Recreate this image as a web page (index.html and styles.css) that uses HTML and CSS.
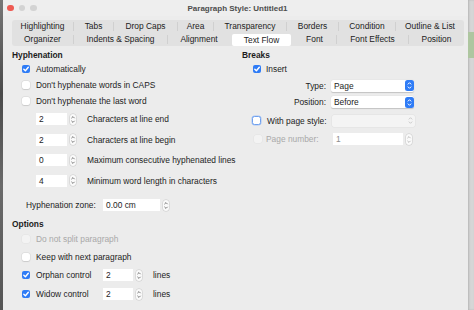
FILE: index.html
```html
<!DOCTYPE html>
<html lang="en">
<head>
    <meta charset="UTF-8">
    <meta name="viewport" content="width=device-width, initial-scale=1.0">
    <title>Paragraph Style: Untitled1</title>
    <link rel="stylesheet" href="styles.css">
</head>
<body>
    <div class="screen">
        <div class="edge-left"></div>

        <div class="window">
            <div class="titlebar">
                <div class="lights">
                    <span class="light red"></span>
                    <span class="light"></span>
                    <span class="light"></span>
                </div>
                <div class="title">Paragraph Style: Untitled1</div>
                <div></div>
            </div>

            <div class="tabs">
                <div class="tab-row row-1">
                    <span class="tab">Highlighting</span>
                    <span class="tab">Tabs</span>
                    <span class="tab">Drop Caps</span>
                    <span class="tab">Area</span>
                    <span class="tab">Transparency</span>
                    <span class="tab">Borders</span>
                    <span class="tab">Condition</span>
                    <span class="tab">Outline &amp; List</span>
                </div>
                <div class="tab-row row-2">
                    <span class="tab">Organizer</span>
                    <span class="tab">Indents &amp; Spacing</span>
                    <span class="tab">Alignment</span>
                    <span class="tab active">Text Flow</span>
                    <span class="tab no-sep">Font</span>
                    <span class="tab">Font Effects</span>
                    <span class="tab">Position</span>
                </div>
            </div>

            <div class="content">
                <div class="columns">
                    <!-- Hyphenation -->
                    <section class="col">
                        <div class="head">Hyphenation</div>

                        <div class="check-row">
                            <span class="box checked"><svg viewBox="0 0 8 8"><path d="M1.8 4.2 L3.4 5.8 L6.3 2.2"/></svg></span>
                            <span>Automatically</span>
                        </div>
                        <div class="check-row">
                            <span class="box"></span>
                            <span>Don't hyphenate words in CAPS</span>
                        </div>
                        <div class="check-row">
                            <span class="box"></span>
                            <span>Don't hyphenate the last word</span>
                        </div>

                        <div class="spin-row">
                            <span class="field">2</span>
                            <span class="stepper"><svg viewBox="0 0 6 11"><path d="M1.4 4.2 L3 2.6 L4.6 4.2 M1.4 6.8 L3 8.4 L4.6 6.8"/></svg></span>
                            <span class="spin-label">Characters at line end</span>
                        </div>
                        <div class="spin-row">
                            <span class="field">2</span>
                            <span class="stepper"><svg viewBox="0 0 6 11"><path d="M1.4 4.2 L3 2.6 L4.6 4.2 M1.4 6.8 L3 8.4 L4.6 6.8"/></svg></span>
                            <span class="spin-label">Characters at line begin</span>
                        </div>
                        <div class="spin-row">
                            <span class="field">0</span>
                            <span class="stepper"><svg viewBox="0 0 6 11"><path d="M1.4 4.2 L3 2.6 L4.6 4.2 M1.4 6.8 L3 8.4 L4.6 6.8"/></svg></span>
                            <span class="spin-label">Maximum consecutive hyphenated lines</span>
                        </div>
                        <div class="spin-row">
                            <span class="field">4</span>
                            <span class="stepper"><svg viewBox="0 0 6 11"><path d="M1.4 4.2 L3 2.6 L4.6 4.2 M1.4 6.8 L3 8.4 L4.6 6.8"/></svg></span>
                            <span class="spin-label">Minimum word length in characters</span>
                        </div>

                        <div class="zone-row">
                            <span class="zone-label">Hyphenation zone:</span>
                            <span class="field wide">0.00 cm</span>
                            <span class="stepper"><svg viewBox="0 0 6 11"><path d="M1.4 4.2 L3 2.6 L4.6 4.2 M1.4 6.8 L3 8.4 L4.6 6.8"/></svg></span>
                        </div>
                    </section>

                    <!-- Breaks -->
                    <section class="col">
                        <div class="head">Breaks</div>

                        <div class="check-row insert">
                            <span class="box checked"><svg viewBox="0 0 8 8"><path d="M1.8 4.2 L3.4 5.8 L6.3 2.2"/></svg></span>
                            <span>Insert</span>
                        </div>

                        <div class="select-row">
                            <span class="select-label">Type:</span>
                            <span class="select">Page<span class="select-btn"><svg viewBox="0 0 9 11"><path d="M2.8 4.4 L4.5 2.7 L6.2 4.4 M2.8 6.6 L4.5 8.3 L6.2 6.6"/></svg></span></span>
                        </div>
                        <div class="select-row position">
                            <span class="select-label">Position:</span>
                            <span class="select">Before<span class="select-btn"><svg viewBox="0 0 9 11"><path d="M2.8 4.4 L4.5 2.7 L6.2 4.4 M2.8 6.6 L4.5 8.3 L6.2 6.6"/></svg></span></span>
                        </div>

                        <div class="page-row style-row">
                            <span class="box focus"></span>
                            <span class="page-label">With page style:</span>
                            <span class="select disabled"><span class="select-btn off"><svg viewBox="0 0 9 11"><path d="M2.8 4.4 L4.5 2.7 L6.2 4.4 M2.8 6.6 L4.5 8.3 L6.2 6.6"/></svg></span></span>
                        </div>
                        <div class="page-row number-row">
                            <span class="box disabled"></span>
                            <span class="page-label grey">Page number:</span>
                            <span class="field number">1</span>
                            <span class="stepper faint"><svg viewBox="0 0 6 11"><path d="M1.4 4.2 L3 2.6 L4.6 4.2 M1.4 6.8 L3 8.4 L4.6 6.8"/></svg></span>
                        </div>
                    </section>
                </div>

                <!-- Options -->
                <section class="options">
                    <div class="head">Options</div>

                    <div class="opt-row">
                        <span class="box disabled"></span>
                        <span class="grey">Do not split paragraph</span>
                    </div>
                    <div class="opt-row">
                        <span class="box"></span>
                        <span>Keep with next paragraph</span>
                    </div>
                    <div class="opt-row">
                        <span class="box checked"><svg viewBox="0 0 8 8"><path d="M1.8 4.2 L3.4 5.8 L6.3 2.2"/></svg></span>
                        <span class="opt-label">Orphan control</span>
                        <span class="field">2</span>
                        <span class="stepper"><svg viewBox="0 0 6 11"><path d="M1.4 4.2 L3 2.6 L4.6 4.2 M1.4 6.8 L3 8.4 L4.6 6.8"/></svg></span>
                        <span class="lines">lines</span>
                    </div>
                    <div class="opt-row last">
                        <span class="box checked"><svg viewBox="0 0 8 8"><path d="M1.8 4.2 L3.4 5.8 L6.3 2.2"/></svg></span>
                        <span class="opt-label">Widow control</span>
                        <span class="field">2</span>
                        <span class="stepper"><svg viewBox="0 0 6 11"><path d="M1.4 4.2 L3 2.6 L4.6 4.2 M1.4 6.8 L3 8.4 L4.6 6.8"/></svg></span>
                        <span class="lines">lines</span>
                    </div>
                </section>
            </div>
        </div>

        <div class="edge-right">
            <div class="green"></div>
        </div>
    </div>
</body>
</html>
```

FILE: styles.css
```css
body {
    margin: 0;
    padding: 0;
    font-family: "Liberation Sans", Arial, sans-serif;
    font-size: 8.4px;
    color: #1c1c1c;
    background-color: #d4d4d4;
}

.screen {
    display: flex;
    width: 474px;
    height: 310px;
    overflow: hidden;
}

.edge-left {
    width: 3px;
    background: linear-gradient(#777 0, #4a4a4a 30%, #6a6a6a 60%, #555 100%);
}

.edge-right {
    flex: 1;
    background-color: #d6d6d6;
    box-shadow: inset 1px 0 2px rgba(0, 0, 0, 0.15);
    padding-top: 32px;
}

.edge-right .green {
    height: 26px;
    background-color: #aec6a0;
}

.window {
    width: 465px;
    display: flex;
    flex-direction: column;
    background-color: #ececec;
}

/* title bar */
.titlebar {
    height: 16px;
    display: grid;
    grid-template-columns: 1fr auto 1fr;
    align-items: center;
    background-color: #eeeeee;
}

.lights {
    display: flex;
    gap: 5px;
    padding-left: 4px;
}

.light {
    width: 6.5px;
    height: 6.5px;
    border-radius: 50%;
    background-color: #d3d3d3;
}

.light.red {
    background-color: #ee5a52;
}

.title {
    font-size: 8px;
    font-weight: bold;
    color: #4d4d4d;
    padding-left: 4px;
}

/* tabs */
.tabs {
    margin: 4px 4px 0 9px;
    background-color: #e1e1e1;
    border-radius: 3px;
}

.tab-row {
    display: grid;
    height: 13px;
    align-items: center;
}

.row-1 {
    grid-template-columns: 61px 40px 64px 36px 73px 52px 57px 1fr;
}

.row-2 {
    grid-template-columns: 61px 94px 63px 63px 43px 72px 1fr;
}

.tab {
    text-align: center;
    line-height: 9px;
    color: #222;
}

.tab + .tab {
    border-left: 1px solid #d0d0d0;
}

.tab.active {
    background-color: #fff;
    border-radius: 2px;
    border-left: none;
    line-height: 12px;
    margin: 0 2px;
}

.tab.no-sep {
    border-left: none;
}

/* content */
.content {
    padding-left: 9px;
}

.columns {
    display: grid;
    grid-template-columns: 230px 1fr;
}

.head {
    font-weight: bold;
    height: 12px;
    line-height: 12px;
    margin-top: 3px;
}

.check-row {
    height: 16px;
    display: flex;
    align-items: center;
    gap: 6px;
    padding-left: 10px;
}

.check-row.insert {
    padding-left: 11px;
    gap: 5px;
}

.box {
    width: 8px;
    height: 8px;
    border-radius: 2px;
    background-color: #fff;
    box-shadow: 0 0 0 0.5px rgba(0, 0, 0, 0.08), 0 0.5px 1px rgba(0, 0, 0, 0.1);
    display: flex;
    flex-shrink: 0;
}

.box svg {
    width: 8px;
    height: 8px;
}

.box path {
    fill: none;
    stroke: #fff;
    stroke-width: 1.4;
    stroke-linecap: round;
    stroke-linejoin: round;
}

.box.checked {
    background-color: #2f7cf6;
    box-shadow: none;
}

.box.focus {
    width: 7px;
    height: 7px;
    border: 1px solid #6fa0ee;
    border-radius: 2.5px;
    box-shadow: 0 0 0 0.5px #a9c6f4;
}

.box.disabled {
    background-color: #f3f3f3;
    box-shadow: 0 0 0 0.5px rgba(0, 0, 0, 0.04);
}

.grey {
    color: #a9a9a9;
}

.field {
    width: 28px;
    height: 12px;
    line-height: 12px;
    padding-left: 3px;
    background-color: #fff;
    flex-shrink: 0;
}

.field.wide {
    width: 54px;
}

.field.number {
    width: 67px;
    margin-left: 2px;
    color: #8d8d8d;
}

.stepper {
    width: 6px;
    height: 11px;
    margin-left: 3px;
    border-radius: 3px;
    background-color: #fafafa;
    box-shadow: 0 0 0 0.5px rgba(0, 0, 0, 0.15);
    display: flex;
    flex-shrink: 0;
}

.stepper svg {
    width: 6px;
    height: 11px;
}

.stepper path {
    fill: none;
    stroke: #5a5a5a;
    stroke-width: 0.8;
}

.stepper.faint path {
    stroke: #b0b0b0;
}

.spin-row {
    height: 20.5px;
    display: flex;
    align-items: center;
    padding-left: 24px;
}

.spin-label {
    margin-left: 11px;
}

.zone-row {
    height: 20px;
    margin-top: 4px;
    display: flex;
    align-items: center;
    padding-left: 14px;
}

.zone-label {
    width: 77px;
}

/* breaks */
.select-row {
    height: 17px;
    display: flex;
    align-items: center;
}

.select-row.position {
    height: 16.5px;
}

.select-label {
    width: 84px;
    text-align: right;
    margin-right: 5px;
}

.select {
    width: 80px;
    height: 12px;
    line-height: 12px;
    padding-left: 3px;
    background-color: #fff;
    border-radius: 2px;
    box-shadow: 0 0.5px 1px rgba(0, 0, 0, 0.18);
    display: flex;
    justify-content: space-between;
    align-items: center;
}

.select.disabled {
    background-color: #f4f4f4;
    box-shadow: 0 0 0 0.5px rgba(0, 0, 0, 0.05);
    justify-content: flex-end;
}

.select-btn {
    width: 9px;
    height: 11px;
    margin-right: 0.5px;
    border-radius: 2.5px;
    background-color: #2f7cf6;
    display: flex;
}

.select-btn svg {
    width: 9px;
    height: 11px;
}

.select-btn path {
    fill: none;
    stroke: #fff;
    stroke-width: 1;
}

.select-btn.off {
    background-color: transparent;
}

.select-btn.off path {
    stroke: #b8b8b8;
    stroke-width: 0.7;
}

.page-row {
    display: flex;
    align-items: center;
    padding-left: 10px;
}

.style-row {
    height: 20px;
}

.number-row {
    height: 17px;
    padding-left: 12px;
}

.page-label {
    width: 65px;
    margin-left: 6px;
}

.number-row .page-label {
    margin-left: 4px;
}

/* options */
.options .head {
    margin-top: 3px;
}

.opt-row {
    height: 18px;
    display: flex;
    align-items: center;
    padding-left: 10px;
    gap: 6px;
}

.opt-row.last {
    height: 20px;
}

.opt-label {
    width: 61px;
}

.opt-row .field {
    width: 27px;
}

.opt-row .stepper {
    margin-left: -3px;
}

.lines {
    margin-left: 5px;
}
```
